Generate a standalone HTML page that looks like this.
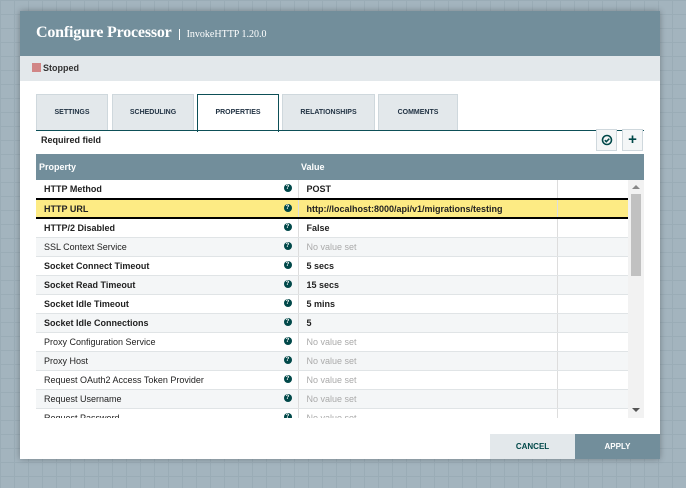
<!DOCTYPE html>
<html><head><style>
*{box-sizing:border-box;margin:0;padding:0}
body{width:686px;height:488px;overflow:hidden;position:relative;font-family:"Liberation Sans",sans-serif;font-size:9px;
background-color:#a3b4be;background-image:linear-gradient(#9aacb6 1px,transparent 1px),linear-gradient(90deg,#9aacb6 1px,transparent 1px);background-size:14px 14px}
.dlg{position:absolute;left:20px;top:11px;width:640px;height:448px;background:#fff;box-shadow:0 0 6px rgba(0,0,0,.3)}
.hdr{height:45px;background:#728e9b;color:#fff;padding:13px 16px}
.hdr b{font-family:"Liberation Serif",serif;font-size:16px;letter-spacing:-.2px}
.hdr span{font-family:"Liberation Serif",serif;font-size:10px;border-left:1px solid #fff;padding-left:7px;margin-left:7px}
.st{height:25px;background:#e3e8eb;padding:7px 12px;font-size:9px;color:#333;font-weight:bold}
.st i{display:inline-block;width:9px;height:9px;background:#d18686;vertical-align:-1px;margin-right:2px}
.tab{position:absolute;top:83px;height:37px;border:1px solid #cfd8dd;background:#e3e8eb;font-size:7px;font-weight:bold;color:#234;text-align:center;line-height:35px}
.tab.a{background:#fff;border-color:#0d4f57;border-bottom:none;height:38px}
.line{position:absolute;left:16px;top:119px;width:608px;height:1px;background:#0d4f57}
.rf{position:absolute;left:21px;top:124px;font-weight:bold;color:#222}
.ib{position:absolute;top:118px;width:21px;height:22px;border:1px solid #cfd8dd;background:#f4f6f7;color:#004849;text-align:center;font-weight:bold}
.hd{position:absolute;left:16px;top:143px;width:608px;height:26px;background:#728e9b}
.wrap{position:absolute;left:16px;top:143px;width:592px;height:264px;overflow:hidden}
table{width:592px;border-collapse:collapse}
th{color:#fff;text-align:left;height:26px;font-size:9px;padding-left:3px}
td{height:19px;border-bottom:1px solid #e0e4e6;padding-left:8px;font-size:9px;color:#222}
td+td{border-left:1px solid #ddd}
tr.g td{background:#f4f6f7}
tr.b td{font-weight:bold}
tr.y td{background:#fdeb84;font-weight:bold;border-top:2px solid #000;border-bottom:2px solid #000}
.q{float:right;margin-right:6px;width:8px;height:8px;border-radius:50%;background:#004849;color:#fff;font-size:6px;line-height:8px;text-align:center;font-weight:bold}
.nv{color:#aaa;font-weight:normal}
.sb{position:absolute;left:608px;top:169px;width:16px;height:238px;background:#f2f2f2}
.th{position:absolute;left:3px;top:14px;width:10px;height:82px;background:#c1c1c1}
.sb b{position:absolute;left:4px;width:0;height:0;border-left:4px solid transparent;border-right:4px solid transparent}
.btn{position:absolute;top:423px;height:25px;width:85px;text-align:center;line-height:25px;font-size:8px;font-weight:bold}
</style></head><body>
<div class="dlg">
<div class="hdr"><b>Configure Processor</b><span>InvokeHTTP 1.20.0</span></div>
<div class="st"><i></i>Stopped</div>
<div class="tab" style="left:16px;width:72px">SETTINGS</div>
<div class="tab" style="left:92px;width:82px">SCHEDULING</div>
<div class="tab a" style="left:177px;width:82px">PROPERTIES</div>
<div class="tab" style="left:262px;width:93px">RELATIONSHIPS</div>
<div class="tab" style="left:358px;width:80px">COMMENTS</div>
<div class="line"></div>
<div class="rf">Required field</div>
<div class="ib" style="left:576px;padding-top:4px"><svg width="12" height="12" viewBox="0 0 12 12"><circle cx="6" cy="6" r="4.5" fill="none" stroke="#004849" stroke-width="1.6"/><path d="M3.8 6.2l1.5 1.5 3-3" fill="none" stroke="#004849" stroke-width="1.5"/></svg></div>
<div class="ib" style="left:602px;font-size:15px;line-height:19px">+</div>
<div class="hd"></div>
<div class="wrap"><table>
<tr><th style="width:262px">Property</th><th style="width:259px">Value</th><th></th></tr>
<tr class="b"><td>HTTP Method<span class="q">?</span></td><td>POST</td><td></td></tr>
<tr class="y"><td>HTTP URL<span class="q">?</span></td><td>http://localhost:8000/api/v1/migrations/testing</td><td></td></tr>
<tr class="b"><td>HTTP/2 Disabled<span class="q">?</span></td><td>False</td><td></td></tr>
<tr class="g"><td>SSL Context Service<span class="q">?</span></td><td class="nv">No value set</td><td></td></tr>
<tr class="b"><td>Socket Connect Timeout<span class="q">?</span></td><td>5 secs</td><td></td></tr>
<tr class="b g"><td>Socket Read Timeout<span class="q">?</span></td><td>15 secs</td><td></td></tr>
<tr class="b"><td>Socket Idle Timeout<span class="q">?</span></td><td>5 mins</td><td></td></tr>
<tr class="b g"><td>Socket Idle Connections<span class="q">?</span></td><td>5</td><td></td></tr>
<tr><td>Proxy Configuration Service<span class="q">?</span></td><td class="nv">No value set</td><td></td></tr>
<tr class="g"><td>Proxy Host<span class="q">?</span></td><td class="nv">No value set</td><td></td></tr>
<tr><td>Request OAuth2 Access Token Provider<span class="q">?</span></td><td class="nv">No value set</td><td></td></tr>
<tr class="g"><td>Request Username<span class="q">?</span></td><td class="nv">No value set</td><td></td></tr>
<tr><td>Request Password<span class="q">?</span></td><td class="nv">No value set</td><td></td></tr>
</table></div>
<div class="sb"><b style="top:5px;border-bottom:4px solid #888"></b><div class="th"></div><b style="bottom:6px;border-top:4px solid #555"></b></div>
<div class="btn" style="left:470px;background:#e3e8eb;color:#004849">CANCEL</div>
<div class="btn" style="left:555px;background:#728e9b;color:#fff">APPLY</div>
</div>
</body></html>
